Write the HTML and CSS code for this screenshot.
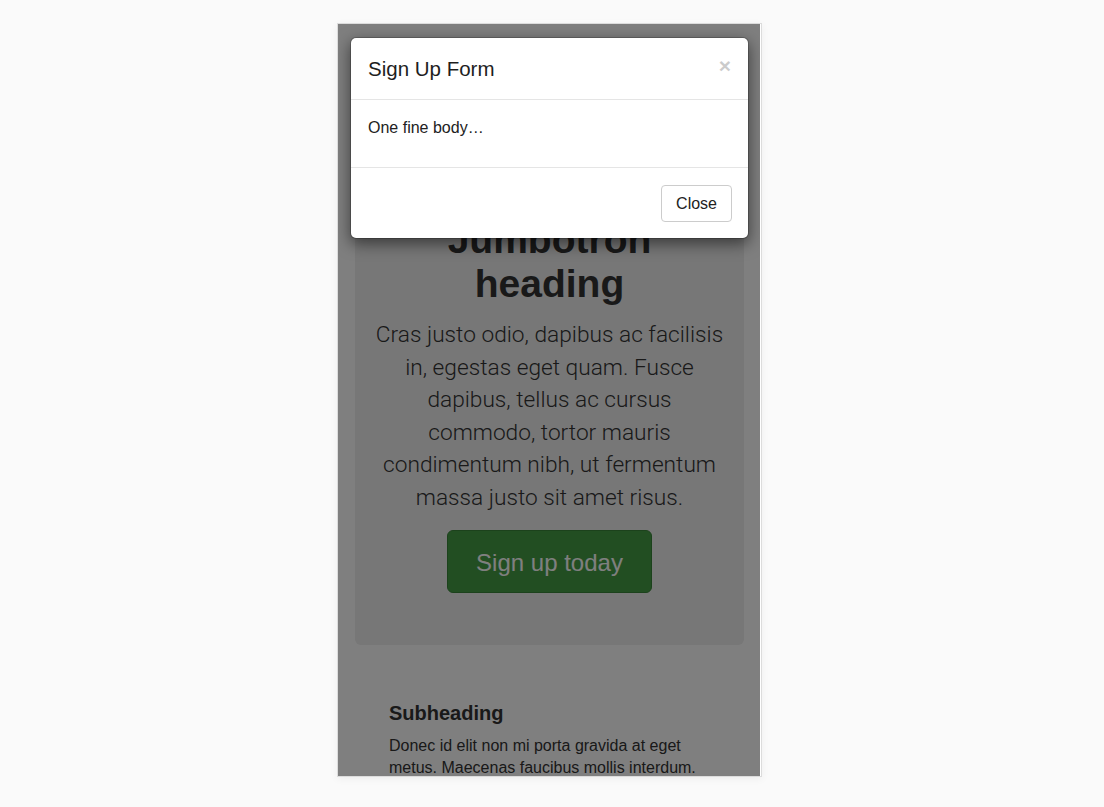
FILE: index.html
```html
<!DOCTYPE html>
<html lang="en">
<head>
<meta charset="utf-8">
<title>Sign Up Form</title>
<link rel="stylesheet" href="styles.css">
</head>
<body>
<div class="stage">
  <div class="device">
    <div class="screen">
      <div class="container">
        <div class="jumbotron">
          <h1>Jumbotron heading</h1>
          <p class="lead">Cras justo odio, dapibus ac facilisis in, egestas eget quam. Fusce dapibus, tellus ac cursus commodo, tortor mauris condimentum nibh, ut fermentum massa justo sit amet risus.</p>
          <a class="btn-signup" href="#">Sign up today</a>
        </div>
        <div class="marketing">
          <h4>Subheading</h4>
          <p>Donec id elit non mi porta gravida at eget metus. Maecenas faucibus mollis interdum.</p>
        </div>
      </div>
      <div class="backdrop"></div>
      <div class="modal">
        <div class="modal-header">
          <h4 class="modal-title">Sign Up Form</h4>
          <button class="close" type="button">&times;</button>
        </div>
        <div class="modal-body">
          <p>One fine body&hellip;</p>
        </div>
        <div class="modal-footer">
          <button class="btn-default" type="button">Close</button>
        </div>
      </div>
    </div>
  </div>
</div>
</body>
</html>
```

FILE: styles.css
```css
* { box-sizing: border-box; }

body {
  margin: 0;
  background: #fafafa;
  font-family: "Liberation Sans", Arial, sans-serif;
  color: #333;
}

.stage {
  padding: 23px 0 30px 337px;
}

.device {
  width: 425px;
  padding-right: 1px;
  border: 1px solid #dcdcdc;
  background: #fff;
  box-shadow: 0 2px 8px rgba(0, 0, 0, 0.05);
}

.screen {
  position: relative;
  width: 422px;
  height: 752px;
  overflow: hidden;
  background: #fff;
}

.container {
  padding: 146px 16px 0 17px;
}

.jumbotron {
  display: flex;
  flex-direction: column;
  background: #eee;
  border-radius: 6px;
  padding: 48px 20px 52px;
  text-align: center;
}

.jumbotron h1 {
  margin: 0;
  font-size: 39px;
  line-height: 44px;
  font-weight: bold;
}

.lead {
  margin: 13px 0 0;
  font-family: Roboto, "Liberation Sans", sans-serif;
  font-size: 22.7px;
  line-height: 32.5px;
  font-weight: 300;
}

.btn-signup {
  align-self: center;
  margin-top: 16px;
  padding: 15px 28px 13px;
  font-size: 24px;
  line-height: 33px;
  color: #fff;
  background: #449d44;
  border: 1px solid #398439;
  border-radius: 6px;
  text-decoration: none;
}

.marketing {
  padding: 57px 34px 0;
}

.marketing h4 {
  margin: 0;
  font-size: 20px;
  line-height: 22px;
  font-weight: bold;
}

.marketing p {
  margin: 10.5px 0 0;
  font-size: 16px;
  line-height: 22px;
}

.backdrop {
  position: absolute;
  inset: 0;
  background: rgba(0, 0, 0, 0.5);
}

.modal {
  position: absolute;
  top: 13px;
  left: 12px;
  width: 399px;
  background: #fff;
  background-clip: padding-box;
  border: 1px solid rgba(0, 0, 0, 0.2);
  border-radius: 6px;
  box-shadow: 0 5px 15px rgba(0, 0, 0, 0.5);
}

.modal-header {
  display: flex;
  justify-content: space-between;
  align-items: flex-start;
  padding: 16px 17px;
  border-bottom: 1px solid #e5e5e5;
}

.modal-title {
  margin: 0;
  font-size: 20.5px;
  line-height: 29px;
  font-weight: normal;
  color: #1e1e1e;
}

.close {
  margin-top: 1px;
  padding: 0;
  border: 0;
  background: none;
  font-family: inherit;
  font-size: 21px;
  font-weight: bold;
  line-height: 1;
  color: #000;
  opacity: 0.2;
}

.modal-body {
  padding: 16px 17px;
}

.modal-body p {
  margin: 0 0 12px;
  font-size: 16px;
  line-height: 23px;
  color: #222;
}

.modal-footer {
  display: flex;
  justify-content: flex-end;
  padding: 17px 16px 16px;
  border-top: 1px solid #e5e5e5;
}

.btn-default {
  padding: 6px 14px;
  font-family: inherit;
  font-size: 16px;
  line-height: 23px;
  color: #222;
  background: #fff;
  border: 1px solid #ccc;
  border-radius: 4px;
}
```
